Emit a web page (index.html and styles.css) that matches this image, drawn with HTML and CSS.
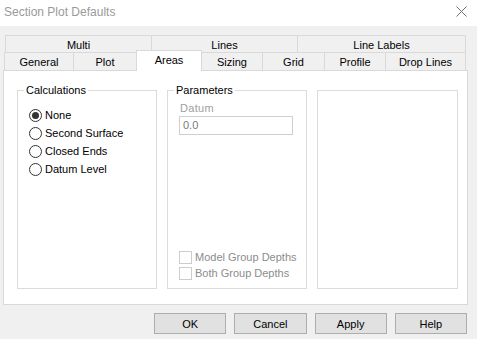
FILE: index.html
```html
<!DOCTYPE html>
<html lang="en">
<head>
    <meta charset="UTF-8">
    <title>Section Plot Defaults</title>
    <link rel="stylesheet" href="styles.css">
</head>
<body>
    <div class="titlebar">
        <span class="title">Section Plot Defaults</span>
        <svg class="close" width="11" height="11" viewBox="0 0 11 11">
            <path d="M0.5 0.5 L10.5 10.5 M10.5 0.5 L0.5 10.5" stroke="#6e6e6e" stroke-width="1" fill="none"/>
        </svg>
    </div>

    <div class="dialog">
        <div class="tab-row row-top">
            <div class="tab">Multi</div>
            <div class="tab">Lines</div>
            <div class="tab last">Line Labels</div>
        </div>
        <div class="tab-row row-bottom">
            <div class="tab">General</div>
            <div class="tab">Plot</div>
            <div class="tab active">Areas</div>
            <div class="tab">Sizing</div>
            <div class="tab">Grid</div>
            <div class="tab">Profile</div>
            <div class="tab last">Drop Lines</div>
        </div>

        <div class="panel">
            <div class="group calc">
                <span class="group-label">Calculations</span>
                <div class="radio-item"><span class="radio checked"></span>None</div>
                <div class="radio-item"><span class="radio"></span>Second Surface</div>
                <div class="radio-item"><span class="radio"></span>Closed Ends</div>
                <div class="radio-item"><span class="radio"></span>Datum Level</div>
            </div>

            <div class="group params">
                <span class="group-label">Parameters</span>
                <div class="field-label">Datum</div>
                <div class="field">0.0</div>
                <div class="checks">
                    <div class="check-item"><span class="checkbox"></span>Model Group Depths</div>
                    <div class="check-item"><span class="checkbox"></span>Both Group Depths</div>
                </div>
            </div>

            <div class="group empty"></div>
        </div>

        <div class="buttons">
            <button>OK</button>
            <button>Cancel</button>
            <button>Apply</button>
            <button>Help</button>
        </div>
    </div>
</body>
</html>
```

FILE: styles.css
```css
* {
    box-sizing: border-box;
}
body {
    margin: 0;
    width: 477px;
    height: 339px;
    overflow: hidden;
    background: #f0f0f0;
    font-family: "Liberation Sans", Arial, sans-serif;
    font-size: 11px;
    color: #000;
}
.titlebar {
    height: 26px;
    background: #fff;
    display: flex;
    align-items: center;
    justify-content: space-between;
    padding: 0 10px 3px 4px;
}
.title {
    font-size: 12px;
    color: #9a9a9a;
}
.close {
    display: block;
}
.dialog {
    padding: 9px 10px 0 3px;
}
.tab-row {
    display: grid;
    height: 18px;
}
.row-top {
    margin-left: 2px;
    grid-template-columns: 146px 146px 169px;
    height: 17px;
}
.row-bottom {
    margin-left: 1px;
    grid-template-columns: 69px 63px 66px 60px 62px 61px 81px;
}
.tab {
    height: 18px;
    border-top: 1px solid #d9d9d9;
    border-left: 1px solid #d9d9d9;
    background: #f0f0f0;
    text-align: center;
    line-height: 17px;
    padding-top: 1px;
}
.row-top .tab {
    height: 17px;
    line-height: 16px;
}
.tab.last {
    border-right: 1px solid #d9d9d9;
}
.tab.active {
    position: relative;
    z-index: 1;
    height: 21px;
    margin-top: -2px;
    margin-bottom: -1px;
    background: #fff;
    border-right: 1px solid #d9d9d9;
    line-height: 17px;
}
.tab.active + .tab {
    border-left: none;
}
.panel {
    height: 235px;
    width: 465px;
    background: #fff;
    border: 1px solid #d9d9d9;
    padding: 19px 0 0 13px;
    display: grid;
    grid-template-columns: 140px 140px 141px;
    column-gap: 10px;
    align-items: start;
}
.group {
    position: relative;
    height: 199px;
    border: 1px solid #dcdcdc;
}
.group-label {
    position: absolute;
    top: -7px;
    left: 6px;
    padding: 0 2px;
    line-height: 13px;
    background: #fff;
}
.calc {
    padding: 15px 0 0 11px;
}
.radio-item {
    display: flex;
    align-items: center;
    height: 18px;
}
.radio {
    width: 13px;
    height: 13px;
    border: 1px solid #333;
    border-radius: 50%;
    margin-right: 3px;
    display: flex;
    align-items: center;
    justify-content: center;
}
.radio.checked::after {
    content: "";
    width: 7px;
    height: 7px;
    border-radius: 50%;
    background: #333;
}
.params {
    display: flex;
    flex-direction: column;
    padding: 11px 4px 7px 11px;
}
.field-label {
    line-height: 13px;
    color: #a0a0a0;
    letter-spacing: 0.3px;
    padding-left: 1px;
}
.field {
    margin-top: 1px;
    width: 114px;
    height: 19px;
    border: 1px solid #cfcfcf;
    color: #7a7a7a;
    padding-left: 3px;
    line-height: 17px;
}
.checks {
    margin-top: auto;
}
.check-item {
    display: flex;
    align-items: center;
    height: 16px;
    color: #8c8c8c;
    white-space: nowrap;
}
.checkbox {
    flex: none;
    width: 13px;
    height: 13px;
    border: 1px solid #cccccc;
    margin-right: 3px;
}
.buttons {
    display: flex;
    gap: 8px;
    margin-top: 8px;
    padding-left: 151px;
}
button {
    width: 73px;
    height: 21px;
    background: #e1e1e1;
    border: 1px solid #adadad;
    font-family: "Liberation Sans", Arial, sans-serif;
    font-size: 11px;
    color: #000;
    padding: 0;
}
```
